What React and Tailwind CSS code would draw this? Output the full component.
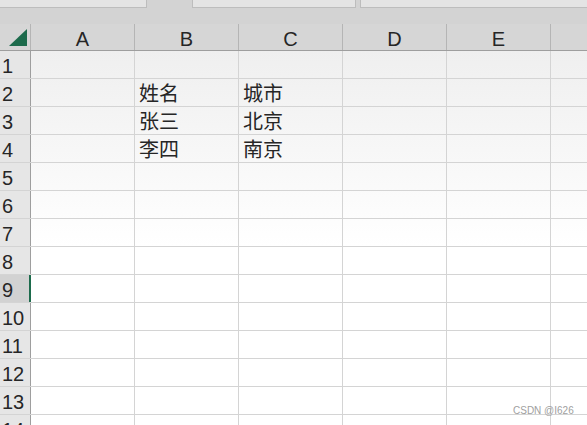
const cols = ['A', 'B', 'C', 'D', 'E'];
const data = {
  2: { B: '姓名', C: '城市' },
  3: { B: '张三', C: '北京' },
  4: { B: '李四', C: '南京' },
};
const rows = Array.from({ length: 14 }, (_, i) => i + 1);

export default function App() {
  return (
    <div
      className="w-[587px] h-[425px] overflow-hidden relative bg-white text-[#262626]"
      style={{ fontFamily: '"Liberation Sans", "Noto Sans CJK SC", sans-serif' }}
    >
      {/* Tab strip */}
      <div className="h-[24px] bg-[#d3d3d3] flex items-start">
        <div className="w-[147px] h-[8px] bg-[#e4e4e4] border-r border-b border-[#bdbdbd] shrink-0" />
        <div className="w-[45px] shrink-0" />
        <div className="w-[164px] h-[8px] bg-[#e4e4e4] border border-t-0 border-[#bdbdbd] shrink-0" />
        <div className="w-[4px] shrink-0" />
        <div className="flex-1 h-[8px] bg-[#e4e4e4] border-l border-b border-[#bdbdbd]" />
      </div>

      {/* Column header */}
      <div className="flex h-[27px] bg-[#d6d6d6] border-b border-[#9e9e9e]">
        <div className="w-[31px] shrink-0 border-r border-[#b5b5b5] relative">
          <svg className="absolute left-[8px] top-[5px]" width="20" height="18" viewBox="0 0 20 18">
            <polygon points="19,0 19,17 1,17" fill="#1d6b4c" />
          </svg>
        </div>
        {cols.map((c) => (
          <div
            key={c}
            className="w-[104px] shrink-0 border-r border-[#b5b5b5] flex items-center justify-center pt-[3px] text-[20px] leading-none"
          >
            {c}
          </div>
        ))}
        <div className="flex-1" />
      </div>

      {/* Rows */}
      <div className="bg-gradient-to-b from-[#efefef] via-white to-white">
        {rows.map((r) => (
          <div key={r} className="flex h-[28px] border-b border-[#d4d4d4]">
            <div
              className={
                'w-[31px] shrink-0 flex items-end pb-[2px] pl-[2px] text-[20px] leading-none ' +
                (r === 9
                  ? 'bg-[#d2d2d2] border-r-2 border-[#1d6b4c]'
                  : 'bg-[#e6e6e6] border-r border-[#9e9e9e]')
              }
            >
              {r}
            </div>
            {cols.map((c) => (
              <div
                key={c}
                className="w-[104px] shrink-0 border-r border-[#d4d4d4] flex items-center pl-[4px] pt-[3px] text-[20px] leading-none"
              >
                {data[r] && data[r][c]}
              </div>
            ))}
            <div className="flex-1" />
          </div>
        ))}
      </div>

      <div className="absolute left-[513px] top-[406px] text-[10px] text-[#a0a0a0] leading-none">
        CSDN @I626
      </div>
    </div>
  );
}
